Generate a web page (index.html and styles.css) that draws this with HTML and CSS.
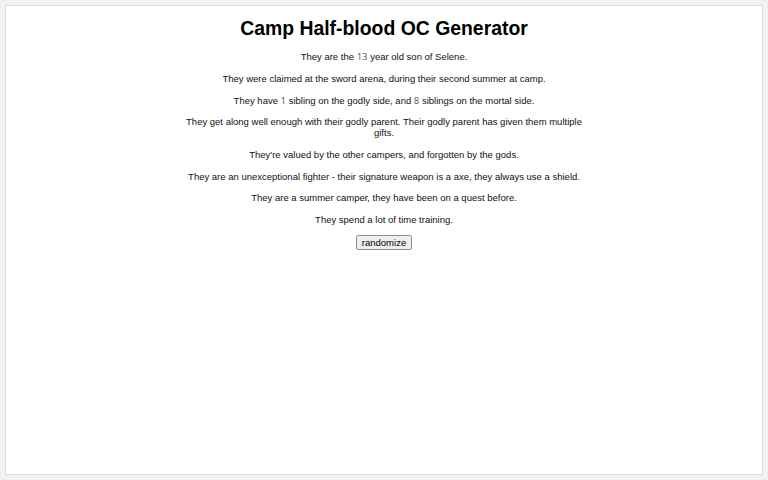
FILE: index.html
```html
<!DOCTYPE html>
<html>
<head>
<meta charset="utf-8">
<link rel="stylesheet" href="styles.css">
</head>
<body>
<div class="card">
  <h1 class="title">Camp Half-blood OC Generator</h1>
  <div class="content">
    <p>They are the <span class="num">13</span> year old son of Selene.</p>
    <p>They were claimed at the sword arena, during their second summer at camp.</p>
    <p>They have <span class="num">1</span> sibling on the godly side, and <span class="num">8</span> siblings on the mortal side.</p>
    <p>They get along well enough with their godly parent. Their godly parent has given them multiple gifts.</p>
    <p>They're valued by the other campers, and forgotten by the gods.</p>
    <p>They are an unexceptional fighter - their signature weapon is a axe, they always use a shield.</p>
    <p>They are a summer camper, they have been on a quest before.</p>
    <p>They spend a lot of time training.</p>
    <button class="btn">randomize</button>
  </div>
</div>
</body>
</html>
```
FILE: styles.css
```css
html, body {
  margin: 0;
  padding: 0;
  background: #f2f2f2;
}
body {
  padding: 5px;
  font-family: "Liberation Sans", Arial, sans-serif;
  color: #111;
}
.card {
  background: #fff;
  border: 1px solid #dcdcdc;
  height: 468px;
  box-sizing: content-box;
  display: flex;
  flex-direction: column;
  align-items: center;
}
.title {
  font-size: 19.4px;
  font-weight: bold;
  margin: 11px 0 1px;
  line-height: 23px;
  color: #000;
}
.content {
  width: 410px;
  text-align: center;
  font-size: 9.5px;
  line-height: 11.2px;
}
.content p {
  margin: 10.4px 0;
}
.num {
  font-family: "Open Sans", sans-serif;
  font-size: 9.5px;
  color: #555;
}
.btn {
  font-family: "Liberation Sans", Arial, sans-serif;
  font-size: 9.5px;
  line-height: 11px;
  padding: 1px 5px;
  margin-top: 0;
  border: 1px solid #8f8f8f;
  border-radius: 2px;
  background: #efefef;
  color: #000;
}
```
